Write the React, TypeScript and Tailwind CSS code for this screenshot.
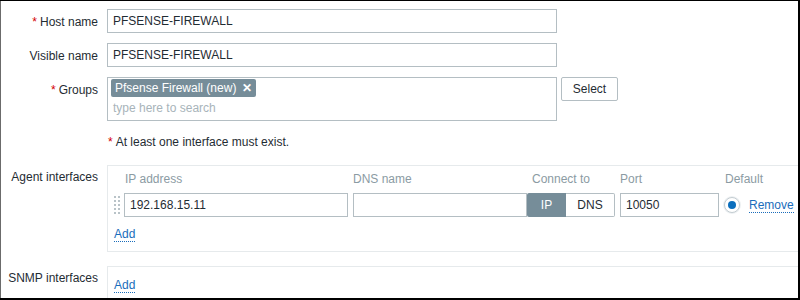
import React from "react";

const font = { fontFamily: '"Liberation Sans", Arial, sans-serif' };

function Label({ text, req }: { text: string; req?: boolean }) {
  return (
    <div className="w-[97px] shrink-0 text-right text-[12px] leading-[14px] text-[#1f2c33] pt-[6px]">
      {req && <span className="text-[#d40000] mr-[3px]">*</span>}
      {text}
    </div>
  );
}

function Input({ value, w }: { value?: string; w: string }) {
  return (
    <div
      className={`${w} h-[24px] shrink-0 border border-[#b4bec3] bg-white px-[5px] flex items-center text-[12px] text-[#1f2c33]`}
    >
      {value}
    </div>
  );
}

function Handle() {
  return (
    <div className="w-[11px] shrink-0 h-[24px] flex items-center">
      <div className="grid grid-cols-2 gap-x-[2px] gap-y-[2px] ml-[1px]">
        {Array.from({ length: 10 }).map((_, i) => (
          <span key={i} className="block w-[2px] h-[2px] bg-[#b9c3c8]" />
        ))}
      </div>
    </div>
  );
}

export default function App() {
  return (
    <div
      style={font}
      className="w-[800px] h-[300px] overflow-hidden bg-white border-t border-r-2 border-b-2 border-t-black border-r-black border-b-black text-[12px] text-[#1f2c33]"
    >
      <div className="flex flex-col pt-[8px] border-l border-l-[#6b6b6b] h-full">
        {/* Host name */}
        <div className="flex gap-[9px]">
          <Label text="Host name" req />
          <Input value="PFSENSE-FIREWALL" w="w-[450px]" />
        </div>
        {/* Visible name */}
        <div className="flex gap-[9px] mt-[10px]">
          <Label text="Visible name" />
          <Input value="PFSENSE-FIREWALL" w="w-[450px]" />
        </div>
        {/* Groups */}
        <div className="flex gap-[9px] mt-[10px]">
          <Label text="Groups" req />
          <div className="flex gap-[4px] items-start">
            <div className="w-[450px] h-[44px] border border-[#b4bec3] bg-white pl-[3px] pt-[1px]">
              <div className="inline-flex items-center h-[18px] bg-[#768d99] text-white px-[4px] text-[12px] rounded-[2px]">
                Pfsense Firewall (new)
                <span className="ml-[6px] text-[12px] font-bold leading-none">✕</span>
              </div>
              <div className="text-[#a8b4ba] pl-[2px] pt-[4px] leading-[14px]">type here to search</div>
            </div>
            <div className="w-[57px] h-[24px] border border-[#b4bec3] bg-white flex items-center justify-center text-[#1f2c33] rounded-[2px]">
              Select
            </div>
          </div>
        </div>
        {/* warning */}
        <div className="flex gap-[9px] mt-[14px]">
          <div className="w-[97px] shrink-0" />
          <div className="leading-[14px] pl-[1px]">
            <span className="text-[#d40000] mr-[3px]">*</span>At least one interface must exist.
          </div>
        </div>
        {/* Agent interfaces */}
        <div className="flex gap-[9px] mt-[16px]">
          <div className="w-[97px] shrink-0 text-right leading-[14px] pt-[5px]">Agent interfaces</div>
          <div className="w-[700px] h-[87px] border border-r-0 border-[#e6eaec] pl-[5px] pt-[6px]">
            <div className="flex text-[#8b9ba3] leading-[14px]">
              <div className="w-[11px]" />
              <div className="w-[229px] pl-[1px]">IP address</div>
              <div className="w-[174px]">DNS name</div>
              <div className="w-[93px] pl-[5px]">Connect to</div>
              <div className="w-[105px]">Port</div>
              <div>Default</div>
            </div>
            <div className="flex items-center mt-[7px]">
              <Handle />
              <Input value="192.168.15.11" w="w-[224px]" />
              <div className="w-[5px]" />
              <Input w="w-[174px]" />
              <div className="flex h-[24px]">
                <div className="w-[39px] bg-[#768d99] text-white flex items-center justify-center rounded-l-[2px]">IP</div>
                <div className="w-[49px] border border-l-0 border-[#b4bec3] bg-white flex items-center justify-center rounded-r-[2px]">DNS</div>
              </div>
              <div className="w-[5px]" />
              <Input value="10050" w="w-[99px]" />
              <div className="w-[5px]" />
              <div className="w-[16px] h-[16px] rounded-full border border-[#c3ccd1] bg-white flex items-center justify-center shadow-[0_0_0_1px_#eef1f3]">
                <div className="w-[8px] h-[8px] rounded-full bg-[#0a6ebd]" />
              </div>
              <div className="w-[9px]" />
              <span className="text-[#1a6dbb] border-b border-dotted border-[#1a6dbb] leading-[14px]">Remove</span>
            </div>
            <div className="pl-[1px] mt-[8px]">
              <span className="text-[#1a6dbb] border-b border-dotted border-[#1a6dbb] leading-[14px] inline-block">Add</span>
            </div>
          </div>
        </div>
        {/* SNMP interfaces */}
        <div className="flex gap-[9px] mt-[14px]">
          <div className="w-[97px] shrink-0 text-right leading-[14px] pt-[5px]">SNMP interfaces</div>
          <div className="w-[700px] h-[60px] border border-r-0 border-[#e6eaec] pl-[6px] pt-[9px]">
            <span className="text-[#1a6dbb] border-b border-dotted border-[#1a6dbb] leading-[14px] inline-block">Add</span>
          </div>
        </div>
      </div>
    </div>
  );
}
